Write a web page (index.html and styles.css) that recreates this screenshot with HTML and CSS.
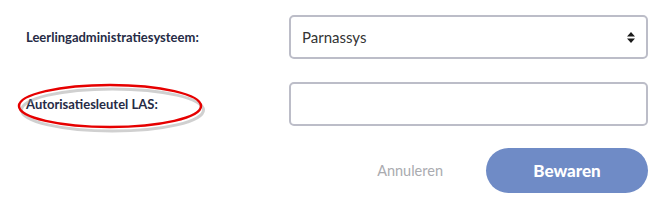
FILE: index.html
```html
<!DOCTYPE html>
<html lang="nl">
<head>
<meta charset="UTF-8">
<meta name="viewport" content="width=device-width, initial-scale=1.0">
<title>Koppeling LAS</title>
<link rel="stylesheet" href="styles.css">
</head>
<body>
<div class="panel">
  <form class="settings">
    <label class="field-label" for="las">Leerlingadministratiesysteem:</label>
    <div class="select-wrap">
      <select id="las" class="field">
        <option>Parnassys</option>
      </select>
      <svg class="select-arrow" width="8" height="11" viewBox="0 0 8 11">
        <path d="M4 0 L8 4.5 H0 Z M0 6.5 H8 L4 11 Z" fill="#1b1b1b"/>
      </svg>
    </div>

    <label class="field-label marked" for="key">
      Autorisatiesleutel LAS:
      <!-- rode markering uit de screenshot -->
      <svg class="mark" width="190" height="50" viewBox="0 0 190 50">
        <ellipse cx="94" cy="25" rx="91" ry="21" fill="none" stroke="#8a8a8a" stroke-opacity="0.4" stroke-width="3" transform="translate(1.5 2)"/>
        <ellipse cx="93" cy="23" rx="91" ry="21" fill="none" stroke="#e60000" stroke-width="2.5"/>
      </svg>
    </label>
    <input id="key" class="field" type="text">

    <div class="actions">
      <button type="button" class="btn-link">Annuleren</button>
      <button type="button" class="btn-primary">Bewaren</button>
    </div>
  </form>
</div>
</body>
</html>
```

FILE: styles.css
```css
body {
  margin: 0;
  background: #fff;
  font-family: Lato, "Open Sans", sans-serif;
}

.panel {
  padding: 15px 0 0 26px;
}

.settings {
  display: grid;
  grid-template-columns: 263px 359px;
  row-gap: 23px;
  align-items: center;
}

.field-label {
  font-size: 13px;
  font-weight: bold;
  color: #262b45;
}

.marked {
  position: relative;
}

.mark {
  position: absolute;
  left: -9px;
  top: -13px;
  pointer-events: none;
}

.select-wrap {
  position: relative;
}

.field {
  box-sizing: border-box;
  width: 100%;
  height: 44px;
  border: 2px solid #bcbdc8;
  border-radius: 5px;
  background: #fff;
  padding: 0 11px;
  font-family: inherit;
  font-size: 15px;
  color: #333;
  outline: none;
}

select.field {
  appearance: none;
  -webkit-appearance: none;
}

.select-arrow {
  position: absolute;
  right: 13px;
  top: 17px;
  pointer-events: none;
}

.actions {
  grid-column: 1 / 3;
  display: flex;
  justify-content: flex-end;
  align-items: center;
  gap: 43px;
  margin-top: -1px;
}

.btn-link {
  border: none;
  background: none;
  padding: 0;
  font-family: inherit;
  font-size: 14.5px;
  color: #aaabb0;
  cursor: pointer;
}

.btn-primary {
  width: 162px;
  height: 45px;
  border: none;
  border-radius: 23px;
  background: #6f8bc6;
  color: #fff;
  font-family: inherit;
  font-size: 17px;
  font-weight: 900;
  cursor: pointer;
}
```
